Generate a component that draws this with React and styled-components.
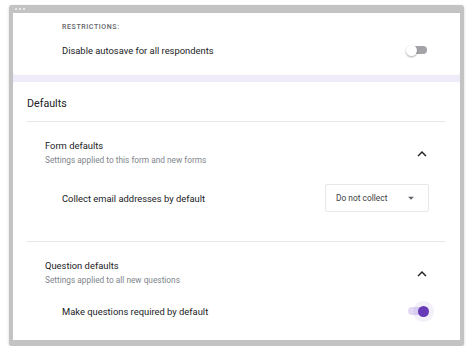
import React from 'react'
import { styled, createGlobalStyle } from 'styled-components'

const GlobalStyle = createGlobalStyle`
  html, body {
    margin: 0;
    padding: 0;
    background: #ffffff;
  }
  body {
    font-family: Roboto, "Liberation Sans", Arial, sans-serif;
    color: #202124;
  }
`

const ChevronUp = () => (
    <svg className='chevron' width="18" height="18" viewBox="0 0 24 24">
        <path d="M7.41 15.41L12 10.83l4.59 4.58L18 14l-6-6-6 6z" fill="#202124" />
    </svg>
)

const ArrowDown = () => (
    <svg width="14" height="14" viewBox="0 0 24 24">
        <path d="M7 10l5 5 5-5z" fill="#5f6368" />
    </svg>
)

const Switch = ({ checked }) => (
    <SwitchStyled $checked={checked}>
        <span className='track' />
        <span className='knob' />
    </SwitchStyled>
)

const Section = ({ title, subtitle, rowTop, label, children, last }) => (
    <SectionStyled $last={last}>
        <div className="section-head">
            <div>
                <div className="title">{title}</div>
                <div className="subtitle">{subtitle}</div>
            </div>
            <ChevronUp />
        </div>
        <Row $top={rowTop} $indent={17} $tall>
            <span>{label}</span>
            {children}
        </Row>
    </SectionStyled>
)

const App = () => {
    return (
        <>
            <GlobalStyle />
            <Frame>
                <div className="dots"><i /><i /><i /></div>
                <Content>
                    <RestrictionsCard>
                        <div className="caption">Restrictions:</div>
                        <Row $top={6} $right={0} $indent={0}>
                            <span>Disable autosave for all respondents</span>
                            <Switch checked={false} />
                        </Row>
                    </RestrictionsCard>

                    <DefaultsCard>
                        <div className="card-title">Defaults</div>
                        <Section
                            title="Form defaults"
                            subtitle="Settings applied to this form and new forms"
                            label="Collect email addresses by default"
                            rowTop={17}
                        >
                            <Select>
                                <span>Do not collect</span>
                                <ArrowDown />
                            </Select>
                        </Section>
                        <Section
                            title="Question defaults"
                            subtitle="Settings applied to all new questions"
                            label="Make questions required by default"
                            rowTop={10}
                            last
                        >
                            <Switch checked />
                        </Section>
                    </DefaultsCard>
                </Content>
            </Frame>
        </>
    )
}

const Frame = styled.div`
    margin: 5px 0 0 9px;
    width: 455px;
    box-sizing: border-box;
    background: #c3c3c3;
    border-radius: 3px;
    padding: 0 4px 6px 4px;
    box-shadow: 0 1px 3px rgba(0, 0, 0, 0.18);

    .dots {
        height: 8px;
        display: flex;
        align-items: center;
        gap: 2px;
        padding-left: 2px;

        i {
            width: 2px;
            height: 2px;
            border-radius: 50%;
            background: #f4f4f4;
        }
    }
`

const Content = styled.div`
    height: 327px;
    background: #f0ebf8;
    display: flex;
    flex-direction: column;
    gap: 7px;
    overflow: hidden;
`

const RestrictionsCard = styled.div`
    background: #ffffff;
    height: 62px;
    box-sizing: border-box;
    padding: 8px 32px 0 49px;
    border-radius: 0 0 4px 4px;

    .caption {
        font-size: 7px;
        line-height: 12px;
        letter-spacing: 0.6px;
        text-transform: uppercase;
        color: #5f6368;
        font-weight: 500;
    }
`

const DefaultsCard = styled.div`
    flex: 1;
    background: #ffffff;
    padding: 14px 15px 0 14px;
    border-radius: 2px 2px 0 0;

    .card-title {
        font-size: 10.7px;
        line-height: 16px;
        padding-bottom: 9px;
        border-bottom: 1px solid #e6e6e6;
        color: #202124;
    }
`

const SectionStyled = styled.div`
    padding: 17px 0 ${({ $last }) => ($last ? '0' : '29px')} 18px;
    border-bottom: ${({ $last }) => ($last ? 'none' : '1px solid #e6e6e6')};

    .section-head {
        display: flex;
        justify-content: space-between;
        align-items: center;

        .title {
            font-size: 9.4px;
            line-height: 14px;
            color: #202124;
        }

        .subtitle {
            font-size: 8.3px;
            line-height: 14px;
            color: #80868b;
        }

        .chevron {
            margin: 1px 14px 0 0;
        }
    }
`

const Row = styled.div`
    display: flex;
    justify-content: space-between;
    align-items: center;
    min-height: ${({ $tall }) => ($tall ? 28 : 22)}px;
    margin-top: ${({ $top }) => $top}px;
    padding-left: ${({ $indent }) => $indent}px;
    margin-right: ${({ $right }) => ($right === undefined ? 16 : $right)}px;
    font-size: 9.4px;
    color: #202124;
`

const Select = styled.div`
    width: 104px;
    height: 28px;
    box-sizing: border-box;
    border: 1px solid #e8e8e8;
    border-radius: 2px;
    display: flex;
    align-items: center;
    justify-content: space-between;
    padding: 0 10px 0 10px;
    font-size: 8.4px;
    color: #3c4043;
`

const SwitchStyled = styled.span`
    position: relative;
    width: 22px;
    height: 12px;
    display: inline-block;

    .track {
        position: absolute;
        left: 1px;
        top: 2px;
        width: 20px;
        height: 8px;
        border-radius: 4px;
        background: ${({ $checked }) => ($checked ? '#e2daf5' : '#a4a4a8')};
    }

    .knob {
        position: absolute;
        top: 0.5px;
        left: ${({ $checked }) => ($checked ? '11px' : '0')};
        width: 11px;
        height: 11px;
        border-radius: 50%;
        background: ${({ $checked }) => ($checked ? '#673ab7' : '#ffffff')};
        box-shadow: ${({ $checked }) =>
            $checked
                ? '0 0 0 5px rgba(103, 58, 183, 0.08)'
                : '0 1px 2px rgba(0, 0, 0, 0.35)'};
    }
`

export default App
